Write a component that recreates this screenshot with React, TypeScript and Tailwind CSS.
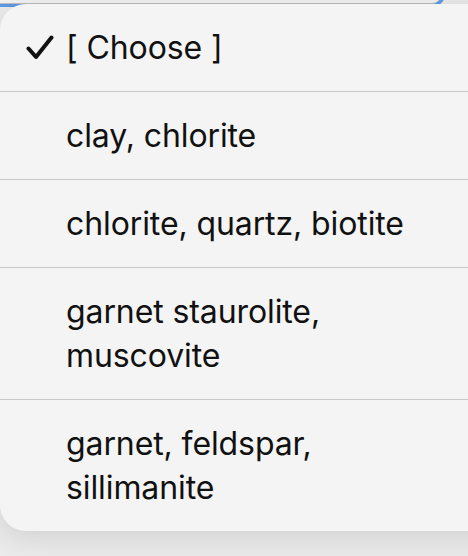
const options = [
  { label: "[ Choose ]", selected: true },
  { label: "clay, chlorite" },
  { label: "chlorite, quartz, biotite" },
  { label: "garnet staurolite, muscovite" },
  { label: "garnet, feldspar, sillimanite" },
];

function Check() {
  return (
    <svg viewBox="0 0 28 26" className="w-[28px] h-[26px]" fill="none">
      <path
        d="M2.5 13.5 L10 22 L25.5 2.5"
        stroke="#111"
        strokeWidth="4"
        strokeLinecap="round"
        strokeLinejoin="round"
      />
    </svg>
  );
}

export default function App() {
  return (
    <div className="relative h-[556px] w-[468px] overflow-hidden bg-[#ebebeb] font-['Inter','Noto_Sans',sans-serif]">
      {/* focused select field behind the menu */}
      <div className="absolute -top-[44px] -left-[20px] w-[462px] h-[48px] rounded-[10px] border border-[#bdbdbd] bg-[#f2f2f2] shadow-[0_0_0_3px_#5b9be6]" />

      {/* Menu */}
      <div className="absolute top-[4px] left-0 w-[520px] rounded-[26px] bg-[#f4f4f4] shadow-[0_6px_30px_rgba(0,0,0,0.12)] overflow-hidden">
        {options.map((opt, i) => (
          <div
            key={opt.label}
            className={`flex items-start pt-[22px] pb-[21px] ${i > 0 ? "border-t border-[#c8c8c8]" : ""}`}
          >
            <div className="w-[66px] shrink-0 flex justify-end pr-[12px] pt-[9px] h-[44px]">
              {opt.selected && <Check />}
            </div>
            <div className="w-[360px] text-[32px] leading-[44px] tracking-[-0.1px] text-[#111]">
              {opt.label}
            </div>
          </div>
        ))}
      </div>
    </div>
  );
}
